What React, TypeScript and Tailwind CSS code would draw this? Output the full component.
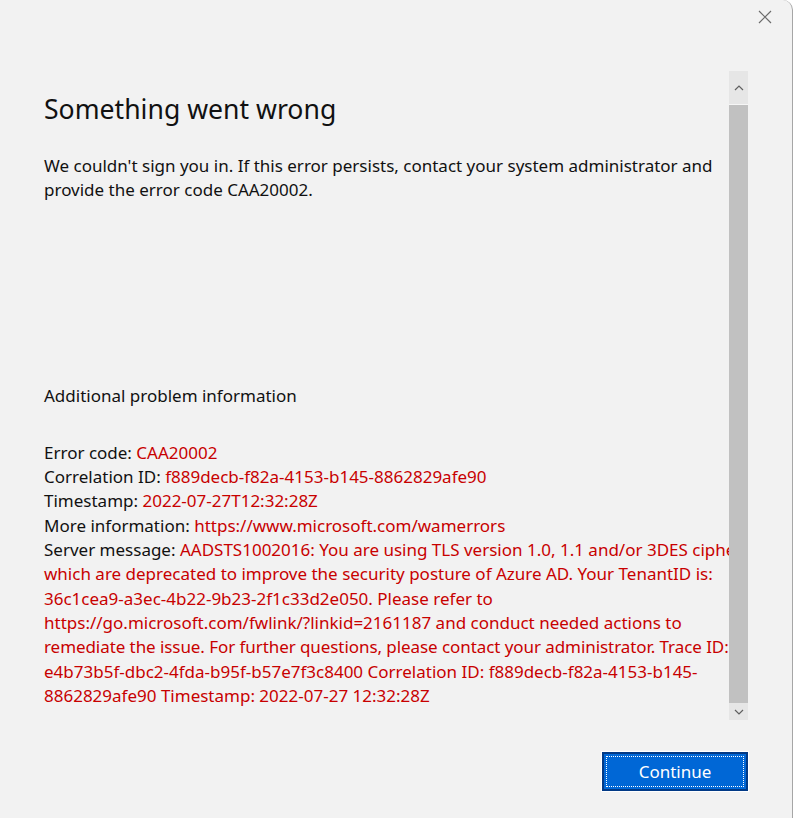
import React from "react";

const red = "text-[#c80000]";

function Line({ children, className = "" }: { children: React.ReactNode; className?: string }) {
  return <div className={"whitespace-nowrap h-[24.3px] leading-[24px] " + className}>{children}</div>;
}

export default function App() {
  return (
    <div
      className="w-[800px] h-[818px] bg-white flex"
      style={{ fontFamily: '"Segoe UI", "Noto Sans", "Open Sans", sans-serif' }}
    >
      <div className="w-[793px] h-full bg-[#f2f2f2] border-r border-[#a6a6a6] rounded-tr-[10px] flex flex-col">
        {/* title bar */}
        <div className="h-[71px] flex justify-end pr-[20px] pt-[9px]">
          <svg width="14" height="14" viewBox="0 0 14 14" className="mt-[1px]">
            <path d="M1 1 L13 13 M13 1 L1 13" stroke="#6b6b6b" strokeWidth="1.2" />
          </svg>
        </div>

        {/* content */}
        <div className="h-[649px] flex">
          <div className="flex-1 pl-[44px] overflow-hidden text-[17px] text-[#111]">
            <h1 className="text-[26.6px] font-normal leading-[36px] mt-[20px]">Something went wrong</h1>
            <div className="mt-[27px] leading-[24px]">
              <Line>We couldn't sign you in. If this error persists, contact your system administrator and</Line>
              <Line>provide the error code CAA20002.</Line>
            </div>
            <div className="mt-[181px]">
              <Line>Additional problem information</Line>
            </div>
            <div className="mt-[33px]">
              <Line>
                Error code: <span className={red}>CAA20002</span>
              </Line>
              <Line>
                Correlation ID: <span className={red}>f889decb-f82a-4153-b145-8862829afe90</span>
              </Line>
              <Line>
                Timestamp: <span className={red}>2022-07-27T12:32:28Z</span>
              </Line>
              <Line>
                More information: <span className={red}>https://www.microsoft.com/wamerrors</span>
              </Line>
              <Line>
                Server message: <span className={red}>AADSTS1002016: You are using TLS version 1.0, 1.1 and/or 3DES ciphers</span>
              </Line>
              <div className={red}>
                <Line>which are deprecated to improve the security posture of Azure AD. Your TenantID is:</Line>
                <Line>36c1cea9-a3ec-4b22-9b23-2f1c33d2e050. Please refer to</Line>
                <Line>https://go.microsoft.com/fwlink/?linkid=2161187 and conduct needed actions to</Line>
                <Line className="tracking-[-0.07px]">
                  remediate the issue. For further questions, please contact your administrator. Trace ID:
                </Line>
                <Line>e4b73b5f-dbc2-4fda-b95f-b57e7f3c8400 Correlation ID: f889decb-f82a-4153-b145-</Line>
                <Line>8862829afe90 Timestamp: 2022-07-27 12:32:28Z</Line>
              </div>
            </div>
          </div>

          {/* scrollbar */}
          <div className="w-[19px] mr-[44px] flex flex-col bg-[#e8e8e8]">
            <div className="h-[33px] bg-[#e6e6e6] flex items-center justify-center">
              <svg width="10" height="6" viewBox="0 0 10 6">
                <path d="M1 5 L5 1 L9 5" stroke="#606060" strokeWidth="1.2" fill="none" />
              </svg>
            </div>
            <div className="flex-1 bg-[#c1c1c1] border-t border-[#f6f6f6]" />
            <div className="h-[17px] bg-[#e6e6e6] flex items-center justify-center">
              <svg width="10" height="6" viewBox="0 0 10 6">
                <path d="M1 1 L5 5 L9 1" stroke="#606060" strokeWidth="1.2" fill="none" />
              </svg>
            </div>
          </div>
        </div>

        {/* footer */}
        <div className="flex justify-end pr-[44px] pt-[32px]">
          <button className="w-[146px] h-[39px] bg-[#0067d6] border-[2px] border-[#023a86] p-[2px] outline outline-1 outline-white">
            <div className="w-full h-full border border-dotted border-white flex items-center justify-center text-white text-[17px]">
              Continue
            </div>
          </button>
        </div>
      </div>
    </div>
  );
}
